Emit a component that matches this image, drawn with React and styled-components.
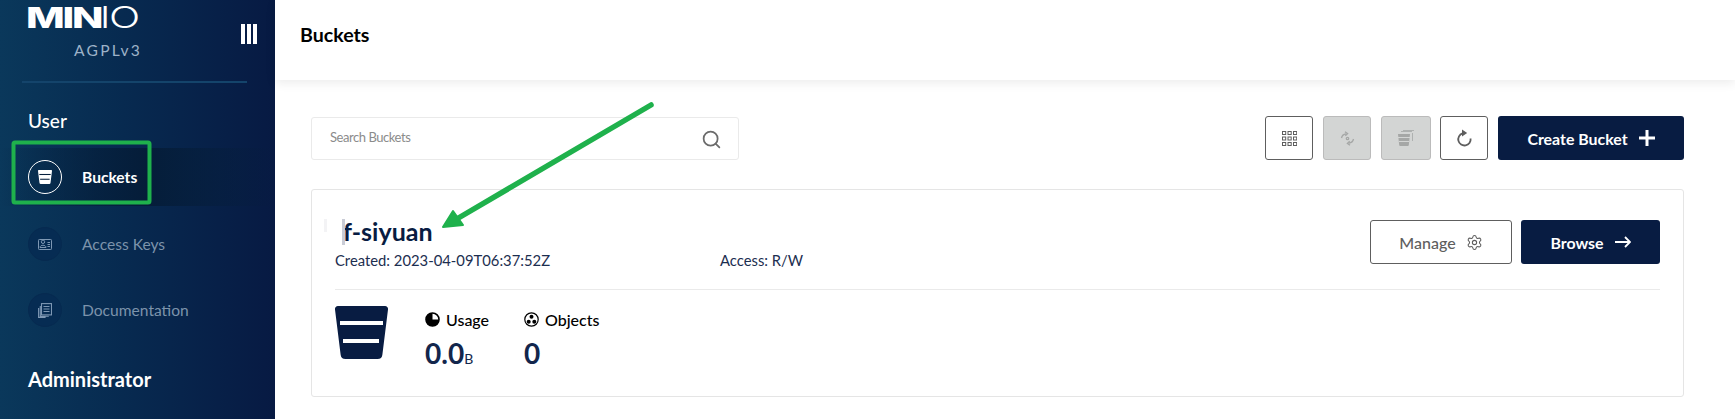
import React from 'react';
import styled, { createGlobalStyle } from 'styled-components';
import { Search, Settings } from 'lucide-react';

const navy = '#081c42';

const GlobalStyle = createGlobalStyle`
  html, body {
    margin: 0;
    padding: 0;
    height: 419px;
    overflow: hidden;
    background: #fff;
    font-family: Lato, 'Noto Sans', sans-serif;
  }
`;

const Page = styled.div`
  position: relative;
  display: flex;
  width: 1735px;
  height: 419px;
  overflow: hidden;
`;

const Sidebar = styled.aside`
  flex: 0 0 275px;
  height: 419px;
  background: linear-gradient(90deg, #0a385b 0%, #072a50 45%, #071a43 100%);
  color: #fff;
  overflow: hidden;
`;

const LogoBar = styled.div`
  height: 81px;
  margin: 0 28px 0 22px;
  border-bottom: 2px solid #14446b;
  box-sizing: content-box;
  display: flex;
  justify-content: space-between;
`;

const Brand = styled.div`
  padding: 4px 0 0 6px;
  width: 114px;
`;

const Wordmark = styled.div`
  height: 28px;
  line-height: 28px;
  margin-left: -2px;
  font-family: Inter, sans-serif;
  font-size: 26px;
  white-space: nowrap;
  transform: scale(1.58, 1.12);
  transform-origin: left center;
`;

const WordBold = styled.span`
  font-weight: 800;
  letter-spacing: -1.4px;
`;

const WordThin = styled.span`
  font-weight: 300;
  letter-spacing: -0.9px;
  margin-left: -1px;
`;

const License = styled.div`
  margin-top: 8px;
  text-align: right;
  font-size: 15.6px;
  line-height: 20px;
  letter-spacing: 2.2px;
  color: #9db2c8;
`;

const MenuToggle = styled.button`
  margin: 24px -10px 0 0;
  padding: 0;
  border: 0;
  background: none;
  display: flex;
  gap: 2px;
  height: 20px;
`;

const ToggleBar = styled.span`
  width: 4px;
  height: 20px;
  background: #fff;
`;

const SectionTitle = styled.div`
  padding-left: 28px;
  font-size: ${(p) => (p.$strong ? '20px' : '19px')};
  font-weight: ${(p) => (p.$strong ? 700 : 500)};
  line-height: 24px;
  margin-top: ${(p) => p.$top}px;
`;

const NavRow = styled.div`
  display: flex;
  align-items: center;
  height: 58px;
  padding-left: 28px;
  margin-top: ${(p) => p.$top}px;
  background: ${(p) =>
    p.$active
      ? 'linear-gradient(90deg, rgba(0,0,0,0) 0%, #051d39 53%, rgba(81,95,102,0) 100%)'
      : 'none'};
`;

const NavIcon = styled.span`
  flex: 0 0 34px;
  width: 34px;
  height: 34px;
  box-sizing: border-box;
  border-radius: 50%;
  display: flex;
  align-items: center;
  justify-content: center;
  color: ${(p) => (p.$active ? '#fff' : '#7e98b4')};
  background: ${(p) => (p.$active ? 'none' : '#062c53')};
  border: 1px solid ${(p) => (p.$active ? '#fff' : '#062a50')};
`;

const NavLabel = styled.span`
  margin-left: 20px;
  font-size: 15.6px;
  font-weight: ${(p) => (p.$active ? 700 : 400)};
  color: ${(p) => (p.$active ? '#fff' : '#7c93ab')};
`;

const Main = styled.main`
  flex: 1;
  min-width: 0;
  background: #fff;
`;

const Header = styled.header`
  height: 80px;
  display: flex;
  align-items: center;
  padding: 0 0 12px 25px;
  box-sizing: border-box;
  background: #fff;
  box-shadow: 0 3px 10px rgba(0, 0, 0, 0.08);
  font-size: 19.6px;
  font-weight: 700;
  color: #000;
`;

const Content = styled.div`
  padding: 36px 51px 0 36px;
`;

const Toolbar = styled.div`
  display: flex;
  align-items: center;
`;

const SearchBox = styled.div`
  width: 428px;
  height: 43px;
  box-sizing: border-box;
  border: 1px solid #eaeaea;
  border-radius: 3px;
  display: flex;
  align-items: center;
  justify-content: space-between;
  padding: 0 16px 3px 18px;
  font-size: 13px;
  letter-spacing: -0.45px;
  color: #8b8b8b;
  margin-right: auto;
  svg {
    color: #6b6b6b;
    margin-top: 5px;
  }
`;

const IconButton = styled.button`
  width: ${(p) => p.$width || 48}px;
  height: 44px;
  padding: 0;
  box-sizing: border-box;
  margin-left: ${(p) => p.$gap ?? 10}px;
  border-radius: 3px;
  border: 1px solid ${(p) => (p.$off ? '#bbbbbb' : '#5e5e5e')};
  background: ${(p) => (p.$off ? '#d3d5d4' : '#fff')};
  color: ${(p) => (p.$off ? '#a5a7a6' : '#5e5e5e')};
  display: flex;
  align-items: center;
  justify-content: center;
`;

const SolidButton = styled.button`
  height: 44px;
  width: ${(p) => p.$width}px;
  margin-left: ${(p) => p.$gap}px;
  padding: 0;
  border: 0;
  border-radius: 3px;
  background: ${navy};
  color: #fff;
  font-family: inherit;
  font-size: 15.9px;
  font-weight: 700;
  display: flex;
  align-items: center;
  justify-content: center;
  gap: 11px;
`;

const Card = styled.section`
  margin-top: 29px;
  height: 208px;
  box-sizing: border-box;
  border: 1px solid #e5e5e5;
  border-radius: 3px;
  padding: 30px 23px 0 23px;
  color: ${navy};
`;

const CardTop = styled.div`
  display: flex;
  justify-content: space-between;
  height: 69px;
  border-bottom: 1px solid #eaeaea;
`;

const BucketName = styled.h1`
  margin: -1px 0 0 8px;
  font-size: 25px;
  line-height: 25px;
  font-weight: 700;
  color: ${navy};
`;

const MetaRow = styled.div`
  display: flex;
  margin-top: 6px;
  font-size: 14.8px;
  line-height: 20px;
  color: #1c2e50;
`;

const MetaCell = styled.span`
  width: ${(p) => p.$width}px;
`;

const Actions = styled.div`
  display: flex;
`;

const ManageButton = styled.button`
  width: 142px;
  height: 44px;
  padding: 0;
  box-sizing: border-box;
  border: 1px solid #5e5e5e;
  border-radius: 3px;
  background: #fff;
  color: #5e5e5e;
  font-family: inherit;
  font-size: 16px;
  font-weight: 500;
  display: flex;
  align-items: center;
  justify-content: center;
  gap: 10px;
`;

const CardBottom = styled.div`
  display: flex;
  padding-top: 16px;
`;

const Stat = styled.div`
  width: ${(p) => p.$width}px;
  margin-left: ${(p) => p.$left || 0}px;
  padding-top: 1px;
`;

const StatLabel = styled.div`
  display: flex;
  align-items: center;
  gap: 6px;
  height: 24px;
  font-size: 16px;
  font-weight: 500;
  color: #000;
`;

const StatValue = styled.div`
  margin-top: 4px;
  font-size: 28px;
  line-height: 36px;
  font-weight: 700;
  color: #12264c;
`;

const StatUnit = styled.span`
  font-size: 14px;
  font-weight: 400;
`;

const Annotation = styled.svg`
  position: absolute;
  left: 0;
  top: 0;
  pointer-events: none;
`;

const BucketGlyph = ({ size = 16, color = 'currentColor', gap = '#fff' }) => (
  <svg width={size} height={size} viewBox="0 0 53 53">
    <path
      d="M3 0h47a3 3 0 0 1 3 3.4l-5.6 45A5 5 0 0 1 42.5 53h-32a5 5 0 0 1-4.9-4.6L0 3.4A3 3 0 0 1 3 0z"
      fill={color}
    />
    <rect x="5" y="15" width="43" height="4" fill={gap} />
    <rect x="8" y="33" width="36" height="4" fill={gap} />
  </svg>
);

const GridIcon = () => (
  <svg width="15" height="15" viewBox="0 0 15 15" fill="none" stroke="currentColor" strokeWidth="1">
    {[0, 5.5, 11].map((y) =>
      [0, 5.5, 11].map((x) => (
        <rect key={`${x}-${y}`} x={x + 0.5} y={y + 0.5} width="3.2" height="3" />
      ))
    )}
  </svg>
);

const SyncIcon = () => (
  <svg width="15" height="15" viewBox="0 0 15 15" fill="none" stroke="currentColor" strokeWidth="1.3">
    <path d="M1.5 7A5 5 0 0 1 6 3" />
    <path d="M5 .8 7.6 2.6 5.3 4.8" />
    <path d="M13.5 8A5 5 0 0 1 9 12" />
    <path d="M10 14.2 7.4 12.4 9.7 10.2" />
    <circle cx="7.5" cy="7.5" r="1.2" />
  </svg>
);

const BucketsIcon = () => (
  <svg width="17" height="16" viewBox="0 0 17 16" fill="currentColor">
    <path d="M0 4h12l-1.2 11a1 1 0 0 1-1 1H2.2a1 1 0 0 1-1-1z" />
    <path d="M3 1h11v1H3zM5 0h11v1H5zM14 3h1v8h-1z" opacity=".8" />
    <rect x="0" y="7" width="12" height="1" fill="#d3d5d4" />
    <rect x="1" y="11" width="10" height="1" fill="#d3d5d4" />
  </svg>
);

const RefreshIcon = () => (
  <svg width="17" height="18" viewBox="0 0 17 18" fill="none">
    <path d="M6.5 4.4A6.2 6.2 0 1 0 14.6 9.5" stroke="currentColor" strokeWidth="1.8" />
    <path d="M6 .4 11.2 4 6 7.4z" fill="currentColor" />
  </svg>
);

const PlusIcon = () => (
  <svg width="16" height="16" viewBox="0 0 16 16" stroke="currentColor" strokeWidth="3">
    <path d="M8 0v16M0 8h16" />
  </svg>
);

const ArrowIcon = () => (
  <svg width="16" height="12" viewBox="0 0 16 12" fill="none" stroke="currentColor" strokeWidth="1.8">
    <path d="M0 6h15M10 1l5 5-5 5" />
  </svg>
);

const IdCardIcon = () => (
  <svg width="14" height="12" viewBox="0 0 14 12" fill="none" stroke="currentColor" strokeWidth="1">
    <rect x=".5" y="1.5" width="13" height="10" rx=".8" />
    <circle cx="5" cy="3.8" r="1.7" fill="#062c53" />
    <path d="M2 9.5c0-3 6-3 6 0z" />
    <path d="M9.5 4.5h2.5M9.5 6.5h2.5M9.5 8.5h2.5" />
  </svg>
);

const DocsIcon = () => (
  <svg width="14" height="15" viewBox="0 0 14 15" fill="none" stroke="currentColor" strokeWidth="1.1">
    <rect x="3.5" y=".6" width="10" height="11.3" />
    <path d="M5.5 3.5h6M5.5 6h6M5.5 8.5h6" />
    <path d="M2.3 3v10.2h8.5M.6 5v9.4h7" />
  </svg>
);

const UsageIcon = () => (
  <svg width="15" height="15" viewBox="0 0 15 15">
    <circle cx="7.5" cy="7.5" r="6.5" fill="#fff" stroke="#000" strokeWidth="1.6" />
    <path d="M7.5 7.5V1A6.5 6.5 0 1 0 14 7.5z" fill="#000" />
  </svg>
);

const ObjectsIcon = () => (
  <svg width="15" height="15" viewBox="0 0 15 15">
    <circle cx="7.5" cy="7.5" r="6.7" fill="none" stroke="#000" strokeWidth="1.2" />
    <circle cx="7.5" cy="4.7" r="2" />
    <circle cx="4.7" cy="9.7" r="2" />
    <circle cx="10.3" cy="9.7" r="2" />
  </svg>
);

export default function App() {
  return (
    <Page>
      <GlobalStyle />
      <Sidebar>
        <LogoBar>
          <Brand>
            <Wordmark>
              <WordBold>MIN</WordBold>
              <WordThin>IO</WordThin>
            </Wordmark>
            <License>AGPLv3</License>
          </Brand>
          <MenuToggle aria-label="Collapse menu">
            <ToggleBar />
            <ToggleBar />
            <ToggleBar />
          </MenuToggle>
        </LogoBar>
        <SectionTitle $top={26}>User</SectionTitle>
        <NavRow $active $top={15}>
          <NavIcon $active>
            <BucketGlyph size={14} color="#fff" gap="#061f3d" />
          </NavIcon>
          <NavLabel $active>Buckets</NavLabel>
        </NavRow>
        <NavRow $top={9}>
          <NavIcon>
            <IdCardIcon />
          </NavIcon>
          <NavLabel>Access Keys</NavLabel>
        </NavRow>
        <NavRow $top={8}>
          <NavIcon>
            <DocsIcon />
          </NavIcon>
          <NavLabel>Documentation</NavLabel>
        </NavRow>
        <SectionTitle $strong $top={28}>
          Administrator
        </SectionTitle>
      </Sidebar>
      <Main>
        <Header>Buckets</Header>
        <Content>
          <Toolbar>
            <SearchBox>
              Search Buckets
              <Search size={21} strokeWidth={2} />
            </SearchBox>
            <IconButton aria-label="Select multiple">
              <GridIcon />
            </IconButton>
            <IconButton $off aria-label="Set replication">
              <SyncIcon />
            </IconButton>
            <IconButton $off $width={50} aria-label="Set lifecycle">
              <BucketsIcon />
            </IconButton>
            <IconButton $gap={9} aria-label="Refresh">
              <RefreshIcon />
            </IconButton>
            <SolidButton $width={186} $gap={10}>
              Create Bucket
              <PlusIcon />
            </SolidButton>
          </Toolbar>
          <Card>
            <CardTop>
              <div>
                <BucketName>f-siyuan</BucketName>
                <MetaRow>
                  <MetaCell $width={385}>Created: 2023-04-09T06:37:52Z</MetaCell>
                  <MetaCell>Access: R/W</MetaCell>
                </MetaRow>
              </div>
              <Actions>
                <ManageButton>
                  Manage
                  <Settings size={17} strokeWidth={1.5} />
                </ManageButton>
                <SolidButton $width={139} $gap={9}>
                  Browse
                  <ArrowIcon />
                </SolidButton>
              </Actions>
            </CardTop>
            <CardBottom>
              <BucketGlyph size={53} color={navy} />
              <Stat $left={37} $width={99}>
                <StatLabel>
                  <UsageIcon />
                  Usage
                </StatLabel>
                <StatValue>
                  0.0<StatUnit>B</StatUnit>
                </StatValue>
              </Stat>
              <Stat $width={120}>
                <StatLabel>
                  <ObjectsIcon />
                  Objects
                </StatLabel>
                <StatValue>0</StatValue>
              </Stat>
            </CardBottom>
          </Card>
        </Content>
      </Main>
      <Annotation width="1735" height="419" viewBox="0 0 1735 419">
        <rect x="13.5" y="142.5" width="136" height="60" rx="1.5" fill="none" stroke="#1fb14c" strokeWidth="4" />
        <line x1="651" y1="105" x2="455" y2="220" stroke="#1fb14c" strokeWidth="5.5" strokeLinecap="round" />
        <polygon points="443,227 453,211 463,225" fill="#1fb14c" stroke="#1fb14c" strokeWidth="2" strokeLinejoin="round" />
        <rect x="342" y="219" width="3" height="26" fill="#c9ccd6" />
        <rect x="324" y="219" width="3" height="13" fill="#f3f3f5" />
      </Annotation>
    </Page>
  );
}
